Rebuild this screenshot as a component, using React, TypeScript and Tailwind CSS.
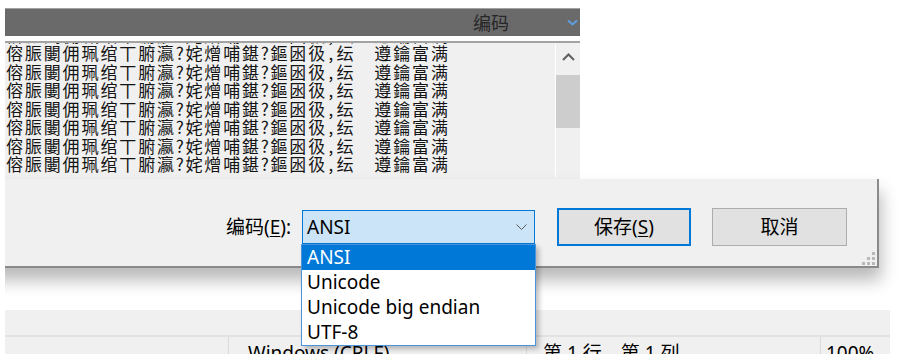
import React from "react";

const line = "傛脤闄佣珮绾丅腑瀛?姹熷哺鍖?鏂囦彶,纭  遵鑰富满";
const rows = Array.from({ length: 8 }, () => line);

// fixed-pitch cells, like the old bitmap font in the editor
function EditorLine({ text }: { text: string }) {
  return (
    <div className="h-[18.5px] leading-[18.5px] whitespace-pre">
      {Array.from(text).map((ch, i) => (
        <span
          key={i}
          className={
            ch.charCodeAt(0) < 256
              ? "inline-block w-[9.45px] text-center"
              : "inline-block w-[18.9px] text-center"
          }
        >
          {ch}
        </span>
      ))}
    </div>
  );
}

function ResizeGrip() {
  return (
    <svg width="13" height="13" viewBox="0 0 13 13" className="absolute right-[2px] bottom-[1px]">
      <g fill="#b9b9b9">
        <rect x="10" y="0" width="3" height="3" />
        <rect x="5" y="5" width="3" height="3" />
        <rect x="10" y="5" width="3" height="3" />
        <rect x="0" y="10" width="3" height="3" />
        <rect x="5" y="10" width="3" height="3" />
        <rect x="10" y="10" width="3" height="3" />
      </g>
    </svg>
  );
}

const options = ["ANSI", "Unicode", "Unicode big endian", "UTF-8"];

export default function App() {
  return (
    <div className="flex w-[899px] h-[361px] bg-white font-['Noto_Sans','Noto_Sans_CJK_SC',sans-serif] text-black">
      <div className="w-[5px] shrink-0" />
      <div className="relative w-[894px] h-[361px] overflow-hidden pt-[8px]">
        {/* header strip */}
        <div className="flex items-center w-[575px] h-[28px] bg-[#6a6a6a] border-t border-[#a2a2a2]">
          <span className="ml-[468px] text-[18px] leading-none text-[#262626]">编码</span>
          <svg width="11" height="7" viewBox="0 0 11 7" className="ml-[58px]">
            <path d="M1 1.5 L5.5 5.5 L10 1.5" fill="none" stroke="#5f9fe0" strokeWidth="2" />
          </svg>
        </div>
        <div className="mt-[5px] w-[575px] h-[2px] bg-[#a3a3a3]" />

        {/* editor */}
        <div className="flex w-[575px] h-[136px] bg-[#f0f0f0]">
          <div className="w-[550px] overflow-hidden">
            <div className="-mt-[17.5px] text-[17px] text-[#141414] font-['Noto_Sans_CJK_SC',sans-serif]">
              {rows.map((r, i) => (
                <EditorLine key={i} text={r} />
              ))}
            </div>
          </div>
          <div className="w-px h-[135px] bg-white" />
          <div className="flex flex-col w-[24px] h-[135px]">
            <div className="flex justify-center pt-[10px] h-[32px]">
              <svg width="13" height="8" viewBox="0 0 13 8">
                <path d="M1 7 L6.5 1.5 L12 7" fill="none" stroke="#606060" strokeWidth="2" />
              </svg>
            </div>
            <div className="h-[53px] bg-[#cdcdcd]" />
          </div>
        </div>

        {/* save dialog bottom */}
        <div className="relative -ml-[30px] w-[904px] h-[89px] pl-[30px] bg-[#f0f0f0] border-r-2 border-b-2 border-[#8a8a8a] shadow-[2px_12px_16px_rgba(0,0,0,0.28)]">
          <div className="flex items-center pt-[29px] h-[67px] text-[19px]">
            <div className="ml-[221px] w-[64px] shrink-0 whitespace-nowrap">
              编码(<span className="underline underline-offset-2">E</span>):
            </div>
            <div className="relative ml-[12px] w-[233px] h-[34px] shrink-0">
              <div className="flex items-center h-full pl-[4px] pr-[7px] bg-[#cce4f7] border border-[#0078d7]">
                <span className="flex-1">ANSI</span>
                <svg width="11" height="7" viewBox="0 0 11 7">
                  <path d="M0.5 0.5 L5.5 5.5 L10.5 0.5" fill="none" stroke="#5a5a5a" strokeWidth="1" />
                </svg>
              </div>
              <div className="absolute left-[-1px] top-[34px] z-10 w-[235px] bg-white border border-[#4a94dc] shadow-[3px_3px_5px_rgba(0,0,0,0.25)]">
                {options.map((o, i) => (
                  <div
                    key={o}
                    className={
                      i === 0
                        ? "flex items-center h-[25px] pl-[5px] bg-[#0078d7] text-white"
                        : "flex items-center h-[25px] pl-[5px]"
                    }
                  >
                    {o}
                  </div>
                ))}
              </div>
            </div>
            <button className="ml-[22px] w-[134px] h-[38px] shrink-0 bg-[#e1e1e1] border-2 border-[#0078d7]">
              保存(<span className="underline underline-offset-2">S</span>)
            </button>
            <button className="ml-[21px] w-[135px] h-[38px] shrink-0 bg-[#e1e1e1] border border-[#adadad]">
              取消
            </button>
          </div>
          <ResizeGrip />
        </div>

        {/* status bar */}
        <div className="flex flex-col mt-[42px] w-[885px] h-[44px] bg-[#f0f0f0] overflow-hidden">
          <div className="h-[25px] shrink-0" />
          <div className="h-[2px] shrink-0 bg-[#e2e2e2]" />
          <div className="flex flex-1 text-[19px] leading-none">
            <div className="w-[223px] shrink-0" />
            <div className="w-[298px] shrink-0 pl-[19px] pt-[7px] border-l border-[#dadada] whitespace-nowrap">
              Windows (CRLF)
            </div>
            <div className="w-[294px] shrink-0 pl-[16px] pt-[7px] border-l border-[#dadada] whitespace-nowrap">
              第 1 行，第 1 列
            </div>
            <div className="flex-1 pl-[5px] pt-[7px] border-l border-[#dadada] whitespace-nowrap">100%</div>
          </div>
        </div>
      </div>
    </div>
  );
}
